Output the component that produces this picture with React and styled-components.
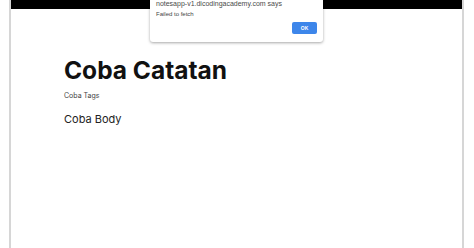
import React from 'react';
import styled, { createGlobalStyle } from 'styled-components';

const GlobalStyle = createGlobalStyle`
  html, body {
    margin: 0;
    padding: 0;
    background: #ffffff;
    font-family: Inter, "Liberation Sans", sans-serif;
  }
`;

const Page = styled.div`
  position: relative;
  height: 248px;
  padding: 0 10px 0 9px;
  box-sizing: border-box;
  overflow: hidden;
`;

const Frame = styled.div`
  height: 100%;
  border-left: 2px solid #d6d6d6;
  border-right: 2px solid #d6d6d6;
  box-sizing: border-box;
  display: flex;
  flex-direction: column;
`;

const TopBar = styled.div`
  height: 9px;
  background: #000000;
  flex-shrink: 0;
`;

const Content = styled.main`
  padding: 0 0 0 53px;
  color: #111111;
`;

const Title = styled.h1`
  margin: 46px 0 0;
  font-size: 24.5px;
  line-height: 30px;
  font-weight: 700;
`;

const Tags = styled.p`
  margin: 6px 0 0;
  font-size: 7px;
  line-height: 9px;
  color: #444444;
`;

const Body = styled.p`
  margin: 12px 0 0;
  font-size: 11px;
  line-height: 14px;
  color: #222222;
`;

const Dialog = styled.div`
  position: absolute;
  top: 0;
  left: 150px;
  width: 173px;
  height: 42px;
  background: #ffffff;
  border-radius: 0 0 3px 3px;
  box-shadow: 0 1px 3px rgba(0, 0, 0, 0.35);
  box-sizing: border-box;
  padding: 0 6px;
  display: flex;
  flex-direction: column;
  font-family: "Liberation Sans", Arial, sans-serif;
  color: #444444;
`;

const Origin = styled.div`
  font-size: 7px;
  line-height: 7px;
  color: #4a4a4a;
`;

const Message = styled.div`
  font-size: 6px;
  line-height: 8px;
  margin-top: 3px;
  color: #444444;
`;

const Actions = styled.div`
  display: flex;
  justify-content: flex-end;
  margin-top: 4px;
`;

const OkButton = styled.button`
  width: 25px;
  height: 12px;
  padding: 0;
  border: none;
  border-radius: 2px;
  background: #3d86ea;
  color: #ffffff;
  font-size: 5px;
  font-weight: 700;
  font-family: "Liberation Sans", Arial, sans-serif;
`;

export default function App() {
  return (
    <>
      <GlobalStyle />
      <Page>
        <Frame>
          <TopBar />
          <Content>
            <Title>Coba Catatan</Title>
            <Tags>Coba Tags</Tags>
            <Body>Coba Body</Body>
          </Content>
        </Frame>
        <Dialog>
          <Origin>notesapp-v1.dicodingacademy.com says</Origin>
          <Message>Failed to fetch</Message>
          <Actions>
            <OkButton>OK</OkButton>
          </Actions>
        </Dialog>
      </Page>
    </>
  );
}
